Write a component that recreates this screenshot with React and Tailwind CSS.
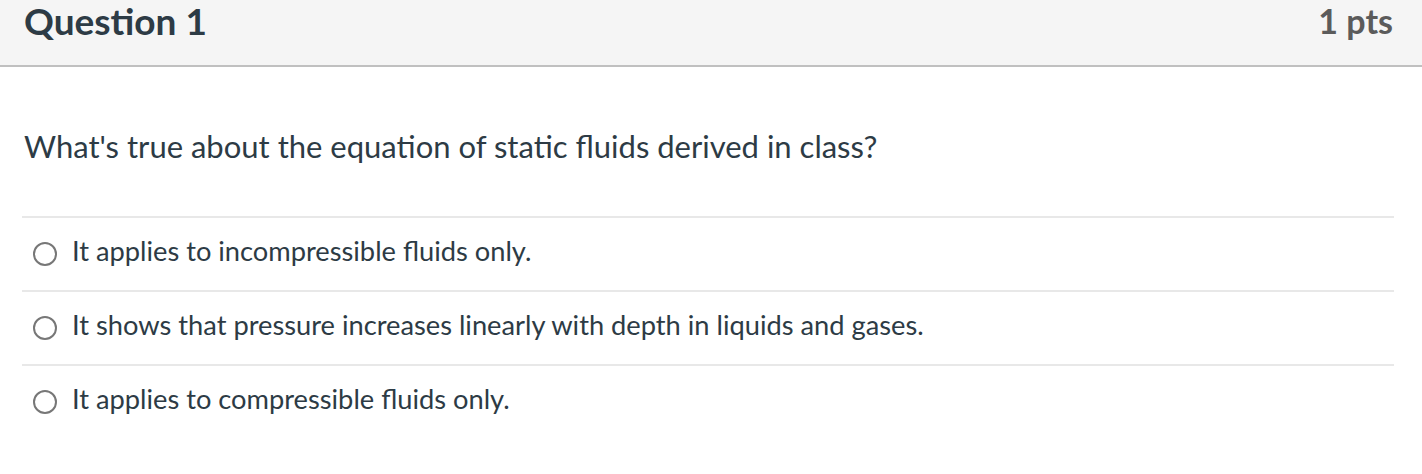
import React from 'react';

const answers = [
  'It applies to incompressible fluids only.',
  'It shows that pressure increases linearly with depth in liquids and gases.',
  'It applies to compressible fluids only.',
];

const App = () => {
  return (
    <div className="w-[1422px] h-[474px] bg-white text-[#2d3b45] font-['Lato','Liberation_Sans',sans-serif]">
      <div className="h-[67px] bg-[#f5f5f5] border-b-2 border-[#c0c0c0] flex items-center justify-between pl-[24px] pr-[29px]">
        <h2 className="text-[37px] font-bold leading-none -mt-[24px]">Question 1</h2>
        <span className="text-[34px] font-bold leading-none text-[#5b5b5b] -mt-[24px]">1 pts</span>
      </div>
      <div className="pl-[22px] pr-[28px]">
        <p className="pt-[60px] pb-[51px] pl-[2px] text-[31px] leading-[38px]">
          What's true about the equation of static fluids derived in class?
        </p>
        {answers.map((a, i) => (
          <div key={i} className="border-t-2 border-[#e8e8e8] h-[74px] flex items-center gap-[15px] pl-[11px]">
            <span className="w-[24px] h-[24px] rounded-full border-2 border-[#777] bg-white shrink-0 -mt-[1px]" />
            <span className="text-[27.25px] leading-none -mt-[6px]">{a}</span>
          </div>
        ))}
      </div>
    </div>
  );
};

export default App;
